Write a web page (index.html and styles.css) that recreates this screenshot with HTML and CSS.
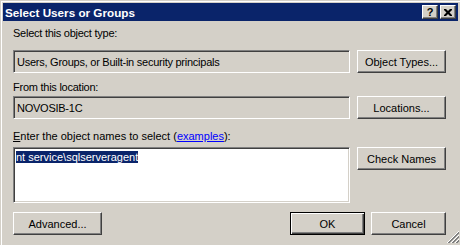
FILE: index.html
```html
<!DOCTYPE html>
<html>
<head>
<meta charset="utf-8">
<link rel="stylesheet" href="styles.css">
</head>
<body>
<div class="window">
  <div class="titlebar">
    <span class="title">Select Users or Groups</span>
    <div class="caps">
      <span class="capbtn help">?</span>
      <span class="capbtn close"><svg width="8" height="7" viewBox="0 0 8 7"><path d="M0 0h2l2 2 2-2h2v1l-2.5 2.5 2.5 2.5v1h-2l-2-2-2 2h-2v-1l2.5-2.5-2.5-2.5z" fill="#000"/></svg></span>
    </div>
  </div>
  <div class="content">
    <div class="label l1">Select this object type:</div>
    <div class="row r1">
      <div class="edit disabled">Users, Groups, or Built-in security principals</div>
      <button class="btn">Object Types...</button>
    </div>
    <div class="label l2">From this location:</div>
    <div class="row r2">
      <div class="edit disabled">NOVOSIB-1C</div>
      <button class="btn">Locations...</button>
    </div>
    <div class="label l3"><u>E</u>nter the object names to select (<a class="link">examples</a>):</div>
    <div class="row r3">
      <div class="edit area"><span class="sel">nt service\sqlserveragent</span></div>
      <button class="btn">Check Names</button>
    </div>
    <div class="row bottom">
      <button class="btn">Advanced...</button>
      <div class="spacer"></div>
      <button class="btn small default">OK</button>
      <button class="btn small">Cancel</button>
    </div>
  </div>
  <svg class="grip" width="13" height="13" viewBox="0 0 13 13">
    <g stroke-width="1" shape-rendering="crispEdges">
      <path d="M12.5 0.5 L0.5 12.5" stroke="#fff"/>
      <path d="M12.5 1.5 L1.5 12.5" stroke="#808080"/>
      <path d="M12.5 2.5 L2.5 12.5" stroke="#808080"/>
      <path d="M12.5 4.5 L4.5 12.5" stroke="#fff"/>
      <path d="M12.5 5.5 L5.5 12.5" stroke="#808080"/>
      <path d="M12.5 6.5 L6.5 12.5" stroke="#808080"/>
      <path d="M12.5 8.5 L8.5 12.5" stroke="#fff"/>
      <path d="M12.5 9.5 L9.5 12.5" stroke="#808080"/>
      <path d="M12.5 10.5 L10.5 12.5" stroke="#808080"/>
    </g>
  </svg>
</div>
</body>
</html>
```
FILE: styles.css
```css
html, body {
  margin: 0;
  padding: 0;
  background: #d4d0c8;
}
body {
  font-family: "Liberation Sans", Arial, sans-serif;
  font-size: 11px;
  color: #000;
}
.window {
  position: relative;
  width: 460px;
  height: 245px;
  box-sizing: border-box;
  padding: 3px 2px 0 3px;
  box-shadow: inset 1px 1px #d4d0c8, inset 2px 2px #fff;
  overflow: hidden;
}
.titlebar {
  height: 18px;
  background: #0a246a;
  display: flex;
  align-items: center;
  justify-content: space-between;
  padding-left: 2px;
}
.title {
  color: #fff;
  font-weight: bold;
  font-size: 11.7px;
}
.caps {
  display: flex;
  gap: 2px;
  margin-right: 2px;
}
.capbtn {
  width: 16px;
  height: 14px;
  box-sizing: border-box;
  background: #d4d0c8;
  border: 1px solid;
  border-color: #fff #404040 #404040 #fff;
  box-shadow: inset -1px -1px #808080;
  display: flex;
  align-items: center;
  justify-content: center;
}
.help {
  font-weight: bold;
  font-size: 11px;
  line-height: 12px;
}
.content {
  padding: 0 12px 0 10px;
}
.label {
  height: 13px;
  line-height: 13px;
  white-space: nowrap;
  letter-spacing: -0.25px;
}
.l3 { letter-spacing: 0; }
.l1 { margin-top: 6px; }
.l2 { margin-top: 8px; }
.l3 { margin-top: 11px; }
.r1 { margin-top: 10px; }
.r2 { margin-top: 2px; }
.r3 { margin-top: 4px; }
.bottom { margin-top: 9px; }
.row {
  display: flex;
  align-items: flex-start;
  gap: 7px;
}
.spacer { flex: 1; }
.edit {
  width: 337px;
  box-sizing: border-box;
  border: 1px solid;
  border-color: #808080 #fff #fff #808080;
  box-shadow: inset 1px 1px #404040, inset -1px -1px #d4d0c8;
  white-space: nowrap;
}
.disabled {
  height: 23px;
  display: flex;
  align-items: center;
  padding-left: 3px;
  background: #d4d0c8;
  letter-spacing: -0.25px;
}
.area {
  height: 56px;
  background: #fff;
  padding: 3px 0 0 2px;
  line-height: 13px;
}
.sel {
  background: #0a246a;
  color: #fff;
}
.link {
  color: #0000ff;
  text-decoration: underline;
}
.btn {
  width: 89px;
  height: 23px;
  box-sizing: border-box;
  margin: 0;
  padding: 0;
  font: inherit;
  color: #000;
  background: #d4d0c8;
  border: 1px solid;
  border-color: #fff #404040 #404040 #fff;
  box-shadow: inset -1px -1px #808080;
  border-radius: 0;
}
.small {
  width: 75px;
}
.bottom .small + .small {
  margin-left: -1px;
}
.default {
  border-color: #000;
  box-shadow: inset 1px 1px #fff, inset -1px -1px #404040, inset -2px -2px #808080;
}
.grip {
  position: absolute;
  right: 1px;
  bottom: 1px;
}
```
